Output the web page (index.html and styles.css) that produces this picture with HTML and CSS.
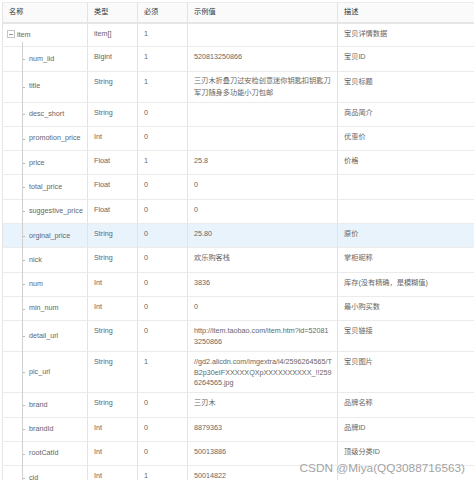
FILE: index.html
```html
<!DOCTYPE html>
<html lang="zh-CN">
<head>
<meta charset="utf-8">
<title>item</title>
<link rel="stylesheet" href="styles.css">
</head>
<body>
<table class="grid">
  <colgroup>
    <col class="c-name"><col class="c-type"><col class="c-req"><col class="c-ex"><col class="c-desc">
  </colgroup>
  <thead>
    <tr class="head"><th>名称</th><th>类型</th><th>必须</th><th>示例值</th><th>描述</th></tr>
  </thead>
  <tbody>
    <tr><td class="name root"><span class="toggle"></span>item</td><td>item[]</td><td>1</td><td></td><td>宝贝详情数据</td></tr>
    <tr><td class="name child">num_iid</td><td>Bigint</td><td>1</td><td>520813250866</td><td>宝贝ID</td></tr>
    <tr class="two"><td class="name child">title</td><td>String</td><td>1</td><td class="cjk">三刃木折叠刀过安检创意迷你钥匙扣钥匙刀军刀随身多功能小刀包邮</td><td>宝贝标题</td></tr>
    <tr><td class="name child">desc_short</td><td>String</td><td>0</td><td></td><td>商品简介</td></tr>
    <tr><td class="name child">promotion_price</td><td>Int</td><td>0</td><td></td><td>优惠价</td></tr>
    <tr><td class="name child">price</td><td>Float</td><td>1</td><td>25.8</td><td>价格</td></tr>
    <tr><td class="name child">total_price</td><td>Float</td><td>0</td><td>0</td><td></td></tr>
    <tr><td class="name child">suggestive_price</td><td>Float</td><td>0</td><td>0</td><td></td></tr>
    <tr class="hover"><td class="name child">orginal_price</td><td>String</td><td>0</td><td>25.80</td><td>原价</td></tr>
    <tr><td class="name child">nick</td><td>String</td><td>0</td><td>欢乐购客栈</td><td>掌柜昵称</td></tr>
    <tr><td class="name child">num</td><td>Int</td><td>0</td><td>3836</td><td>库存(没有精确，是模糊值)</td></tr>
    <tr><td class="name child">min_num</td><td>Int</td><td>0</td><td>0</td><td>最小购买数</td></tr>
    <tr class="two"><td class="name child">detail_url</td><td>String</td><td>0</td><td class="url">http://item.taobao.com/item.htm?id=52081<br>3250866</td><td>宝贝链接</td></tr>
    <tr class="three"><td class="name child">pic_url</td><td>String</td><td>1</td><td class="url">//gd2.alicdn.com/imgextra/i4/2596264565/T<br>B2p30eIFXXXXXQXpXXXXXXXXXX_!!259<br>6264565.jpg</td><td>宝贝图片</td></tr>
    <tr><td class="name child">brand</td><td>String</td><td>0</td><td>三刃木</td><td>品牌名称</td></tr>
    <tr><td class="name child">brandId</td><td>Int</td><td>0</td><td>8879363</td><td>品牌ID</td></tr>
    <tr><td class="name child">rootCatId</td><td>Int</td><td>0</td><td>50013886</td><td>顶级分类ID</td></tr>
    <tr><td class="name child">cid</td><td>Int</td><td>1</td><td>50014822</td><td></td></tr>
  </tbody>
</table>
<div class="watermark">CSDN @Miya(QQ3088716563)</div>
</body>
</html>
```

FILE: styles.css
```css
html, body {
  margin: 0;
  padding: 0;
  overflow: hidden;
  background: #fff;
}

body {
  width: 474px;
  height: 480px;
  position: relative;
  font-family: "Liberation Sans", Arial, "Noto Sans CJK SC", sans-serif;
  font-size: 7.2px;
  color: #666;
}

.grid {
  margin: 2px 0 0 2px;
  border-collapse: collapse;
  table-layout: fixed;
  width: 490px;
  border-left: 1px solid #e4e4e4;
  border-top: 1px solid #ececec;
}

.c-name { width: 85px; }
.c-type { width: 50px; }
.c-req { width: 50px; }
.c-ex { width: 150px; }
.c-desc { width: 155px; }

.grid th,
.grid td {
  box-sizing: border-box;
  padding: 5px 6px 0 6px;
  line-height: 10.4px;
  text-align: left;
  vertical-align: top;
  border-right: 1px solid #e3e3e3;
  border-bottom: 1px solid #ebebeb;
  word-break: break-all;
}

.grid td.url {
  white-space: nowrap;
  overflow: hidden;
  padding-right: 0;
}

.head th {
  height: 20px;
  padding-top: 0;
  vertical-align: middle;
  font-weight: normal;
  color: #333;
  background: #fafafa;
  border-bottom: 2px solid #e6e6e6;
}

.grid td { height: 24.3px; }
.grid tr.two td { height: 31px; }
.grid tr.three td { height: 41px; }

.grid tr.hover td { background: #e9f3fc; }

.grid td.cjk {
  padding-top: 3px;
  line-height: 12.5px;
}

.grid td.name {
  position: relative;
  vertical-align: middle;
  padding: 0;
}

.root {
  padding-left: 4px !important;
}

.toggle {
  display: inline-block;
  box-sizing: border-box;
  width: 8px;
  height: 8px;
  margin: 0 2px 0 0;
  border: 1px solid #c4c4c4;
  vertical-align: -1.5px;
  position: relative;
}

.toggle::after {
  content: "";
  position: absolute;
  left: 1px;
  right: 1px;
  top: 2.5px;
  height: 1px;
  background: #999;
}

.root::after {
  content: "";
  position: absolute;
  left: 19px;
  top: 18px;
  bottom: -1px;
  width: 1px;
  background: #cfcfcf;
}

.child {
  padding-left: 26px !important;
}

.child::before {
  content: "";
  position: absolute;
  left: 19px;
  top: -1px;
  bottom: -1px;
  width: 1px;
  background: #cfcfcf;
}

.child::after {
  content: "";
  position: absolute;
  left: 20px;
  top: 50%;
  width: 2px;
  height: 1px;
  background: #bbb;
}

.watermark {
  position: absolute;
  right: 9px;
  bottom: 5px;
  font-family: "Liberation Sans", Arial, sans-serif;
  font-size: 11.8px;
  line-height: 14px;
  color: #a3a3a3;
  white-space: nowrap;
  text-shadow: 0 0 1px #fff;
}
```
